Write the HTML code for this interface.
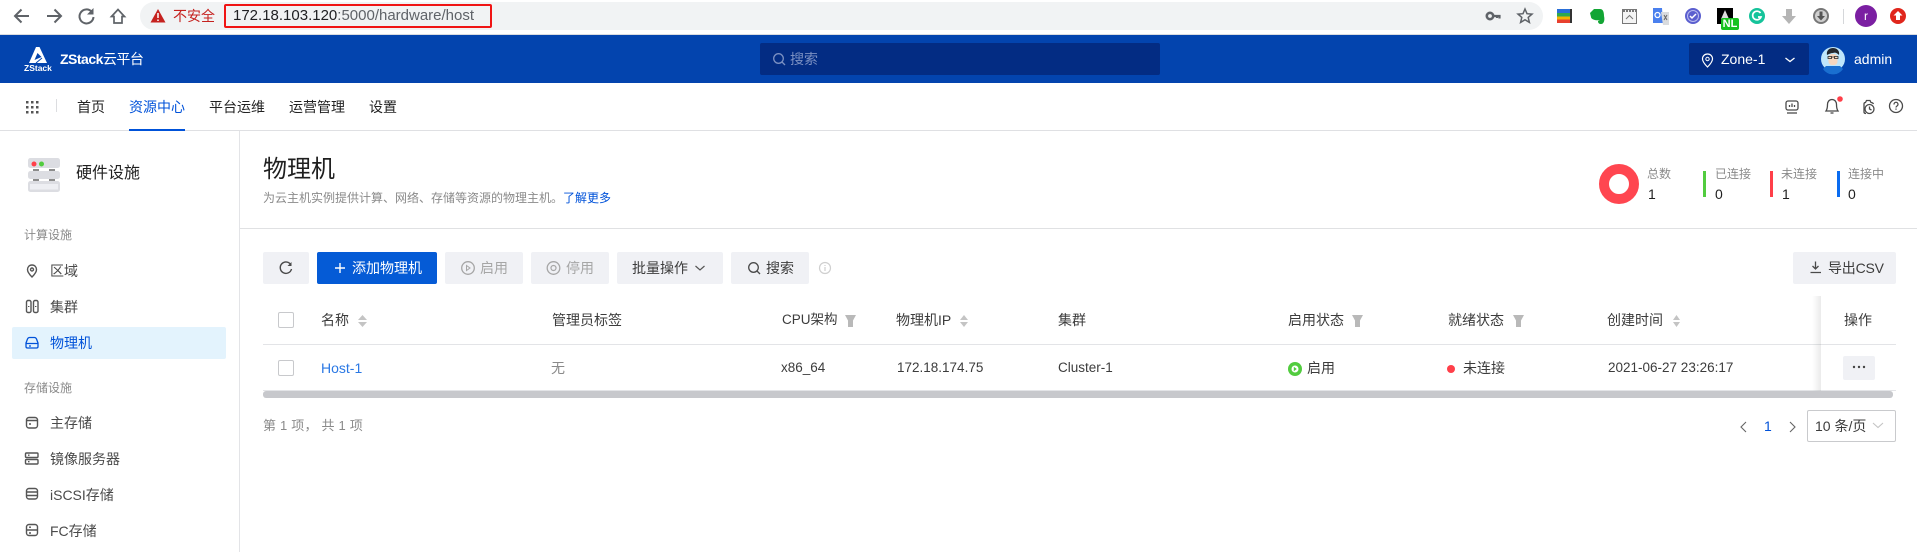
<!DOCTYPE html>
<html lang="zh-CN"><head><meta charset="utf-8"><title>物理机</title>
<style>
html,body{margin:0;padding:0;background:#fff}
body{width:1917px;height:552px;overflow:hidden;position:relative;font-family:"Liberation Sans","Noto Sans CJK SC",sans-serif;font-size:14px;color:#3c3c3c}
.b{position:absolute}
.t{position:absolute;white-space:nowrap;line-height:20px;height:20px}
.btn{position:absolute;top:252px;height:32px;background:#f0f1f5;border-radius:2px}
svg{position:absolute;left:0;top:0}
.g{color:#8a8a8a}.s{font-size:12px}
.d{color:#a6a6a6}
</style></head><body>
<div class="b" style="left:0;top:0;width:1917px;height:34px;background:#fff"></div>
<div class="b" style="left:0;top:34px;width:1917px;height:1px;background:#dadce0"></div>
<div class="b" style="left:140px;top:2px;width:1403px;height:28px;background:#f1f3f4;border-radius:14px"></div>
<div class="t" style="left:173px;top:6px;color:#c5221f">不安全</div>
<div class="b" style="left:224px;top:4px;width:264px;height:20px;border:2px solid #f01414;border-radius:2px"></div>
<div class="t" style="left:233px;top:6px;font-size:15px;color:#5f6368"><span style="color:#202124">172.18.103.120</span>:5000/hardware/host</div>

<div class="b" style="left:0;top:35px;width:1917px;height:48px;background:#0344ae"></div>
<div class="t" style="left:60px;top:49px;color:#fff;font-size:14px;letter-spacing:-.5px"><b>ZStack</b>云平台</div>
<div class="t" style="left:24px;top:58px;color:#fff;font-size:8.5px;font-weight:bold">ZStack</div>
<div class="b" style="left:760px;top:43px;width:400px;height:32px;background:#032c83;border-radius:2px"></div>
<div class="t" style="left:790px;top:49px;color:#7b90c2">搜索</div>
<div class="b" style="left:1689px;top:43px;width:120px;height:32px;background:#032c83;border-radius:2px"></div>
<div class="t" style="left:1721px;top:49px;color:#fff">Zone-1</div>
<div class="t" style="left:1854px;top:49px;color:#fff">admin</div>

<div class="b" style="left:0;top:130px;width:1917px;height:1px;background:#dfe0e3"></div>
<div class="b" style="left:129px;top:129px;width:56px;height:2px;background:#0052d9"></div>
<div class="t" style="left:77px;top:97px;color:#222">首页</div>
<div class="t" style="left:129px;top:97px;color:#0052d9">资源中心</div>
<div class="t" style="left:209px;top:97px;color:#222">平台运维</div>
<div class="t" style="left:289px;top:97px;color:#222">运营管理</div>
<div class="t" style="left:369px;top:97px;color:#222">设置</div>

<div class="b" style="left:239px;top:131px;width:1px;height:421px;background:#e3e4e7"></div>
<div class="t" style="left:76px;top:164px;font-size:16px;color:#1f1f1f">硬件设施</div>
<div class="t g s" style="left:24px;top:225px">计算设施</div>
<div class="t" style="left:50px;top:261px;color:#4a4a4a">区域</div>
<div class="t" style="left:50px;top:297px;color:#4a4a4a">集群</div>
<div class="b" style="left:12px;top:327px;width:214px;height:32px;background:#e3f3fd;border-radius:2px"></div>
<div class="t" style="left:50px;top:333px;color:#0052d9">物理机</div>
<div class="t g s" style="left:24px;top:378px">存储设施</div>
<div class="t" style="left:50px;top:413px;color:#4a4a4a">主存储</div>
<div class="t" style="left:50px;top:449px;color:#4a4a4a">镜像服务器</div>
<div class="t" style="left:50px;top:485px;color:#4a4a4a">iSCSI存储</div>
<div class="t" style="left:50px;top:521px;color:#4a4a4a">FC存储</div>

<div class="t" style="left:263px;top:155px;font-size:24px;line-height:30px;height:30px;color:#1f1f1f">物理机</div>
<div class="t g s" style="left:263px;top:188px">为云主机实例提供计算、网络、存储等资源的物理主机。<span style="color:#0052d9">了解更多</span></div>
<div class="b" style="left:240px;top:228px;width:1677px;height:1px;background:#e0e1e3"></div>

<div class="t g s" style="left:1647px;top:164px">总数</div><div class="t" style="left:1648px;top:184px;color:#1f1f1f">1</div>
<div class="b" style="left:1703px;top:171px;width:3px;height:26px;background:#52cc3f"></div>
<div class="t g s" style="left:1715px;top:164px">已连接</div><div class="t" style="left:1715px;top:184px;color:#1f1f1f">0</div>
<div class="b" style="left:1770px;top:171px;width:3px;height:26px;background:#ff3f49"></div>
<div class="t g s" style="left:1781px;top:164px">未连接</div><div class="t" style="left:1782px;top:184px;color:#1f1f1f">1</div>
<div class="b" style="left:1837px;top:171px;width:3px;height:26px;background:#0a6cf0"></div>
<div class="t g s" style="left:1848px;top:164px">连接中</div><div class="t" style="left:1848px;top:184px;color:#1f1f1f">0</div>

<div class="btn" style="left:263px;width:46px"></div>
<div class="btn" style="left:317px;width:120px;background:#055bd6"></div>
<div class="btn" style="left:445px;width:78px"></div>
<div class="btn" style="left:531px;width:78px"></div>
<div class="btn" style="left:617px;width:106px"></div>
<div class="btn" style="left:731px;width:78px"></div>
<div class="btn" style="left:1793px;width:103px"></div>
<div class="t" style="left:352px;top:258px;color:#fff">添加物理机</div>
<div class="t d" style="left:480px;top:258px">启用</div>
<div class="t d" style="left:566px;top:258px">停用</div>
<div class="t" style="left:632px;top:258px">批量操作</div>
<div class="t" style="left:766px;top:258px">搜索</div>
<div class="t" style="left:1828px;top:258px;letter-spacing:-.2px">导出CSV</div>

<div class="b" style="left:263px;top:344px;width:1633px;height:1px;background:#e3e4e7"></div>
<div class="b" style="left:263px;top:390px;width:1633px;height:1px;background:#e3e4e7"></div>
<div class="b" style="left:263px;top:391px;width:1630px;height:7px;background:#c7c8cc;border-radius:3px"></div>
<div class="b" style="left:1812px;top:296px;width:9px;height:95px;background:linear-gradient(to right,rgba(255,255,255,0),rgba(0,0,0,.08))"></div>
<div class="b" style="left:278px;top:312px;width:14px;height:14px;border:1px solid #c8c9cc;border-radius:2px"></div>
<div class="b" style="left:278px;top:360px;width:14px;height:14px;border:1px solid #c8c9cc;border-radius:2px"></div>
<div class="t" style="left:321px;top:310px">名称</div>
<div class="t" style="left:552px;top:310px">管理员标签</div>
<div class="t" style="left:782px;top:310px;font-size:13.5px">CPU架构</div>
<div class="t" style="left:896px;top:310px">物理机IP</div>
<div class="t" style="left:1058px;top:310px">集群</div>
<div class="t" style="left:1288px;top:310px">启用状态</div>
<div class="t" style="left:1448px;top:310px">就绪状态</div>
<div class="t" style="left:1607px;top:310px">创建时间</div>
<div class="t" style="left:1844px;top:310px">操作</div>

<div class="t" style="left:321px;top:358px;color:#2a78e4">Host-1</div>
<div class="t g" style="left:551px;top:358px">无</div>
<div class="t" style="left:781px;top:358px;font-size:13.5px">x86_64</div>
<div class="t" style="left:897px;top:358px;font-size:13.5px">172.18.174.75</div>
<div class="t" style="left:1058px;top:358px;font-size:13.5px">Cluster-1</div>
<div class="t" style="left:1307px;top:358px">启用</div>
<div class="t" style="left:1463px;top:358px">未连接</div>
<div class="t" style="left:1608px;top:358px;font-size:13.5px">2021-06-27 23:26:17</div>
<div class="b" style="left:1843px;top:356px;width:32px;height:24px;background:#f0f1f5;border-radius:2px"></div>
<div class="t g" style="left:263px;top:416px;font-size:13px;letter-spacing:.2px">第 1 项， 共 1 项</div>
<div class="t" style="left:1764px;top:416px;color:#0052d9">1</div>
<div class="b" style="left:1807px;top:410px;width:87px;height:30px;border:1px solid #c9cacd;border-radius:2px"></div>
<div class="t" style="left:1815px;top:416px">10 条/页</div>

<svg width="1917" height="552" viewBox="0 0 1917 552" fill="none">
<!-- chrome -->
<g stroke="#5f6368" stroke-width="2">
<path d="M29 16H15.500M21.500 9.500 15 16l6.500 6.500"/>
<path d="M47 16h13.500M54.500 9.500 61 16l-6.500 6.500"/>
<path d="M91.500 11.500A7 7 0 1 0 93.500 17"/>
<path d="M111.500 16.500 118 9.500l6.500 7h-2.500v6.500h-8v-6.500z" stroke-width="1.700"/>
</g>
<path d="M93.500 8v6.500H87z" fill="#5f6368"/>
<path d="M158 9l7.500 13.500h-15z" fill="#c5221f"/><path d="M158 13v5M158 19.500v1.500" stroke="#fff" stroke-width="1.500"/>
<circle cx="1490" cy="16" r="3.200" stroke="#5f6368" stroke-width="2.600"/><path d="M1493 16h6.500v2.500M1497 16v2" stroke="#5f6368" stroke-width="2.200"/>
<path d="M1525 9l2 4.700 5 .4-3.800 3.300 1.200 5-4.400-2.700-4.400 2.700 1.200-5-3.800-3.300 5-.4z" stroke="#5f6368" stroke-width="1.500"/>
<!-- extensions -->
<rect x="1557" y="9" width="14" height="4" fill="#2a6fd8"/><rect x="1557" y="13" width="14" height="3.500" fill="#2fa84f"/><rect x="1557" y="16.500" width="14" height="3" fill="#f5b400"/><rect x="1557" y="19.500" width="14" height="3.500" fill="#e8402e"/><rect x="1570" y="9" width="2" height="14" fill="#333"/>
<path d="M1590 13l4-4h6c3 0 4 3 4 7 1 4 0 8-3 8-2 0-3-1-3-3l2-1c-5 1-9-1-9-3z" fill="#12a534"/>
<rect x="1622.500" y="9.500" width="14" height="14" stroke="#777" fill="#f4f4f4"/><path d="M1623 11h13" stroke="#777" stroke-width="2" stroke-dasharray="2 1"/><path d="M1626 19l3.500-3.500L1633 19" stroke="#777"/>
<path d="M1653 8h9l1 15h-10z" fill="#4a80ee"/><path d="M1661 12h8v13h-6z" fill="#d9dbde"/><circle cx="1657.500" cy="15" r="2.500" stroke="#fff" stroke-width="1.300"/><path d="M1664 15l3 5M1667 15l-3 5" stroke="#666"/>
<circle cx="1693" cy="16" r="8" fill="#5b5fcf"/><circle cx="1693" cy="16" r="5.500" stroke="#b9bbee"/><path d="M1690 16l2 2 4-4" stroke="#fff" stroke-width="1.500"/>
<rect x="1717" y="8" width="16" height="16" fill="#000"/><path d="M1725 10l4 9h-8z" fill="#ddd"/>
<rect x="1721" y="18" width="18" height="12" rx="2" fill="#17c21e"/>
<circle cx="1757" cy="16" r="8" fill="#15c39a"/><path d="M1760.500 13a4.300 4.300 0 1 0 .5 4h-3" stroke="#fff" stroke-width="1.700"/>
<path d="M1786 9h6v7h4l-7 8-7-8h4z" fill="#b5b5b5"/>
<circle cx="1821" cy="16" r="8" fill="#777"/><circle cx="1821" cy="16" r="6" fill="#cfcfcf"/><path d="M1819.500 11.500h3V16h2.500l-4 4.500-4-4.500h2.500z" fill="#555"/>
<path d="M1843.500 9v15" stroke="#d5d7da"/>
<circle cx="1866" cy="16" r="11" fill="#7b1fa2"/>
<circle cx="1898" cy="16" r="8" fill="#e0261c"/><path d="M1898 11l4.500 4.500H1900V20h-4v-4.500h-2.500z" fill="#fff"/>
<!-- logo -->
<path d="M36 47h3.500L47 63H29z" fill="#fff"/><path d="M37.500 53l-3 7 7-3z" fill="#0344ae"/><path d="M36 63l6-5" stroke="#0344ae"/>
<!-- search -->
<circle cx="778.500" cy="58.500" r="4.800" stroke="#7b90c2" stroke-width="1.300"/><path d="M782 62l3 3" stroke="#7b90c2" stroke-width="1.300"/>
<!-- zone -->
<path d="M1707.500 54c-3 0-5 2.200-5 5 0 3 3 6 5 8 2-2 5-5 5-8 0-2.800-2-5-5-5z" stroke="#fff" stroke-width="1.200"/><circle cx="1707.500" cy="59" r="1.700" stroke="#fff"/>
<path d="M1785.500 58l4.500 3.500 4.500-3.500" stroke="#fff" stroke-width="1.300"/>
<!-- avatar -->
<circle cx="1833" cy="59" r="12" fill="#bfe6fb"/>
<path d="M1826 66h14l3 3a12 12 0 0 1-20 0z" fill="#1a6fd0"/>
<rect x="1828.500" y="54" width="9" height="11" rx="3.500" fill="#f6d7bf"/>
<path d="M1827 55c-1-5 3-7 6-7s7 2 6 7c-2-2-4-3-6-2-2 0-4 1-6 2z" fill="#24282e"/>
<path d="M1828 56.500h3.500v2h-3.500zM1834.500 56.500h3.500v2h-3.500zM1831.500 57h3" stroke="#222" stroke-width=".8"/>
<!-- nav -->
<g fill="#555"><rect x="26" y="101" width="2.500" height="2.500"/><rect x="31" y="101" width="2.500" height="2.500"/><rect x="36" y="101" width="2.500" height="2.500"/><rect x="26" y="106" width="2.500" height="2.500"/><rect x="31" y="106" width="2.500" height="2.500"/><rect x="36" y="106" width="2.500" height="2.500"/><rect x="26" y="111" width="2.500" height="2.500"/><rect x="31" y="111" width="2.500" height="2.500"/><rect x="36" y="111" width="2.500" height="2.500"/></g>
<path d="M56.500 99v13" stroke="#dcdde0"/>
<g stroke="#4a4a4a" stroke-width="1.300">
<rect x="1786" y="101" width="12" height="9" rx="2"/><path d="M1787 113h10"/><path d="M1789.500 107v-2M1792 107v-3.500M1794.500 107v-2"/>
<path d="M1832 99.500c-3 0-4.500 2.500-4.500 5 0 3-.5 5-1.500 6.500h12c-1-1.500-1.500-3.500-1.500-6.500 0-2.500-1.500-5-4.500-5z"/><path d="M1830.500 113h3"/>
<path d="M1864 104v8c0 1 1 1.500 2 1.500M1864 104c0-1 .5-1.500 1.500-1.500l1-2h3.500l1 2c1 0 2 .5 2.500 1.500"/>
<circle cx="1869.500" cy="109" r="4.500"/><path d="M1869.500 106.500v2.500l2 1"/>
<circle cx="1896" cy="106" r="6.500"/><path d="M1894 104.500c0-3 4-3 4 0 0 1.500-2 1.500-2 3M1896 108.500v1.200"/>
</g>
<circle cx="1840" cy="99" r="2.800" fill="#ff3f49"/>
<!-- sidebar -->
<rect x="28" y="158" width="32" height="10" rx="2.500" fill="#dcdde2"/>
<rect x="28" y="171" width="32" height="8" rx="2.500" fill="#dcdde2"/>
<rect x="28" y="181" width="32" height="11" rx="2.500" fill="#dcdde2"/><rect x="30" y="184" width="28" height="5.500" fill="#eeeff3"/>
<path d="M33 170h6M49 170h6M33 180h6M49 180h6" stroke="#666" stroke-width="1.500"/>
<circle cx="34" cy="164" r="2.500" fill="#ff3f49"/><circle cx="41.500" cy="164" r="2.500" fill="#52cc3f"/>
<g stroke="#555" stroke-width="1.400">
<path d="M32 265c-2.700 0-4.500 2-4.500 4.600 0 2.700 2.500 5.400 4.500 7.400 2-2 4.500-4.700 4.500-7.400 0-2.600-1.800-4.600-4.500-4.600z"/><circle cx="32" cy="269.500" r="1.500"/>
<rect x="26.500" y="300.500" width="4.500" height="12" rx="1.500"/><rect x="33.500" y="300.500" width="4.500" height="12" rx="1.500"/><path d="M28.700 306v1M35.700 306v1"/>
<rect x="26.500" y="417.500" width="11" height="10.500" rx="2.500"/><path d="M26.500 420.500h11M29 424h2"/>
<rect x="25.500" y="453" width="12.500" height="4.500" rx="1"/><rect x="25.500" y="459.500" width="12.500" height="4.500" rx="1"/><path d="M28 455.200h1.500M28 461.700h1.500"/>
<rect x="26.500" y="488.500" width="11" height="10.500" rx="2.500"/><path d="M26.500 492h11M26.500 495.500h11"/>
<rect x="26.500" y="524.500" width="11" height="11" rx="2.500"/><path d="M26.500 530h11M29 527.200h2M29 533h2"/>
</g>
<path d="M29.500 337.500h5c1 0 1.500.5 2 1.500l1.500 4v3.500c0 1-.5 1.500-1.500 1.500h-9c-1 0-1.500-.5-1.500-1.500V343l1.500-4c.5-1 1-1.500 2-1.500zM26 343.500h12M29 346h2" stroke="#0052d9" stroke-width="1.300"/>
<!-- donut -->
<circle cx="1619" cy="184" r="15" stroke="#ff4650" stroke-width="10"/>
<!-- toolbar icons -->
<path d="M291 265a5.700 5.700 0 1 0 .5 4" stroke="#4a4a4a" stroke-width="1.400"/><path d="M291.500 262v4h-4z" fill="#4a4a4a"/>
<path d="M340 263v10M335 268h10" stroke="#fff" stroke-width="1.400"/>
<circle cx="468" cy="268" r="6.300" stroke="#a6a6a6" stroke-width="1.300"/><path d="M466.500 265.500l3.500 2.500-3.500 2.500z" stroke="#a6a6a6"/>
<circle cx="553.500" cy="268" r="6.300" stroke="#a6a6a6" stroke-width="1.300"/><circle cx="553.500" cy="268" r="2.500" stroke="#a6a6a6" stroke-width="1.200"/>
<path d="M695.500 266l4.500 4 4.500-4" stroke="#555" stroke-width="1.200"/>
<circle cx="753.500" cy="267.500" r="4.800" stroke="#4a4a4a" stroke-width="1.300"/><path d="M757 271l3 3" stroke="#4a4a4a" stroke-width="1.300"/>
<circle cx="825" cy="268" r="5.500" stroke="#cfcfcf" stroke-width="1.200"/><path d="M825 265v1M825 267v4" stroke="#cfcfcf" stroke-width="1.200"/>
<path d="M1815.500 261.500v7M1812.500 266l3 3 3-3M1810.500 272.500h10.500" stroke="#4a4a4a" stroke-width="1.300"/>
<!-- sort + filter -->
<g fill="#c4c4c4">
<path d="M362.500 315l4.500 5h-9zM358 322h9l-4.500 5z"/>
<path d="M964 315l4 5h-8zM960 322h8l-4 5z"/>
<path d="M1676.500 315l3.500 5h-7zM1673 322h7l-3.500 5z"/>
</g>
<g fill="#b9b9b9">
<path d="M845 315h11l-3 5.500v6.500h-5v-6.500z"/>
<path d="M1352 315h11l-3 5.500v6.500h-5v-6.500z"/>
<path d="M1513 315h11l-3 5.500v6.500h-5v-6.500z"/>
</g>
<!-- status -->
<circle cx="1295" cy="369" r="7" fill="#52cc3f"/><circle cx="1295" cy="369" r="3.500" fill="#fff"/><path d="M1293.800 366.800l3 2.200-3 2.200z" fill="#52cc3f"/>
<circle cx="1451" cy="369" r="4" fill="#ff3f49"/>
<g fill="#444"><circle cx="1854" cy="367" r="1.200"/><circle cx="1859" cy="367" r="1.200"/><circle cx="1864" cy="367" r="1.200"/></g>
<!-- pagination -->
<path d="M1746 422l-5 5 5 5M1790 422l5 5-5 5" stroke="#666" stroke-width="1.100"/>
<path d="M1873 423l5 4.500 5-4.500" stroke="#c4c4c4" stroke-width="1.100"/>
</svg>
<div class="t" style="left:1862px;top:6px;width:8px;text-align:center;color:#fff;font-size:12px">r</div>
<div class="t" style="left:1721px;top:14px;width:18px;text-align:center;color:#fff;font-size:11px;font-weight:bold">NL</div>
</body></html>
